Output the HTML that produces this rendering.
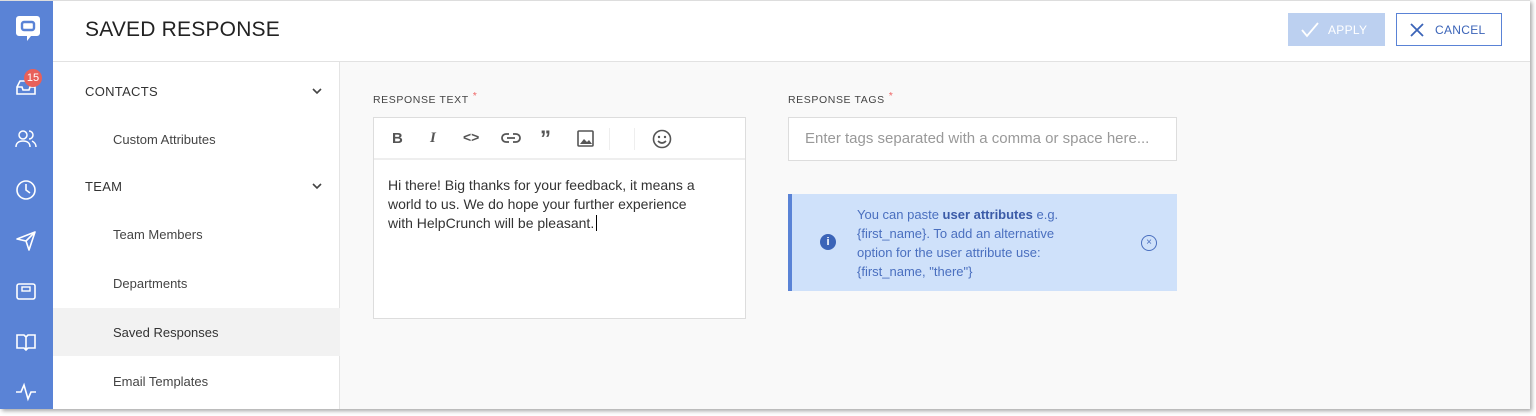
<!DOCTYPE html>
<html><head><style>
*{box-sizing:border-box;margin:0;padding:0}
body{width:1536px;height:416px;background:#fff;font-family:"Liberation Sans",sans-serif;position:relative;overflow:hidden}
.frame{position:absolute;left:0;top:0;width:1530px;height:409px;background:#f9f9f9;box-shadow:2px 2px 4px rgba(0,0,0,.35);border-top:1px solid #ddd;overflow:hidden}
.side{position:absolute;left:0;top:0;width:53px;height:409px;background:#5a83d6}
.side svg{position:absolute;left:15px}
.hdr{position:absolute;left:53px;top:0;right:0;height:61px;background:#fff;border-bottom:1px solid #e2e2e2}
.hdr h1{position:absolute;left:32px;top:17px;font-size:21px;font-weight:normal;color:#222;letter-spacing:.2px}
.btn{position:absolute;top:12px;height:33px;font-size:12px;display:flex;align-items:center;letter-spacing:.3px}
.sub{position:absolute;left:53px;top:61px;width:287px;height:348px;background:#fff;border-right:1px solid #e4e4e4}
.sub div{position:absolute;left:0;width:287px;font-size:13px;color:#444}
.sec{font-size:13px;color:#333!important;padding-left:32px;letter-spacing:.3px}
.sec svg{position:absolute;right:18px;top:4px}
.it{padding-left:60px}
.lbl{position:absolute;font-size:10.5px;color:#444;letter-spacing:.6px}
.lbl b{color:#e66;font-weight:normal;position:relative;top:-4px;margin-left:4px}
</style></head><body>
<div class="frame">
<div class="side">
<svg style="top:14px" width="26" height="32" viewBox="0 0 26 32"><path d="M4 1h18a3 3 0 0 1 3 3v14a3 3 0 0 1-3 3h-6l-4 5v-5H4a3 3 0 0 1-3-3V4a3 3 0 0 1 3-3z" fill="#fff"/><rect x="7" y="7" width="12" height="8" rx="2" fill="none" stroke="#5a83d6" stroke-width="2.4"/></svg>
<svg style="top:76px" width="22" height="20" viewBox="0 0 22 20"><path d="M2 10l3-6h12l3 6v7H2zM2 10h5l1 3h6l1-3h5" fill="none" stroke="#fff" stroke-width="1.6"/></svg>
<div style="position:absolute;left:24px;top:68px;width:18px;height:18px;border-radius:9px;background:#e8605a;color:#fff;font-size:11px;text-align:center;line-height:18px">15</div>
<svg style="top:128px" width="22" height="20" viewBox="0 0 22 20"><circle cx="8" cy="6" r="4" fill="none" stroke="#fff" stroke-width="1.5"/><path d="M1 18c0-4 3-6 7-6s7 2 7 6M14 2a4 4 0 0 1 0 8M17 12c2 1 4 3 4 6" fill="none" stroke="#fff" stroke-width="1.5"/></svg>
<svg style="top:178px" width="22" height="22" viewBox="0 0 22 22"><circle cx="11" cy="11" r="9" fill="none" stroke="#fff" stroke-width="1.6"/><path d="M11 5v6l4 3" fill="none" stroke="#fff" stroke-width="1.6"/></svg>
<svg style="top:229px" width="22" height="22" viewBox="0 0 22 22"><path d="M2 9L20 2 14 20 11 11z M11 11L20 2" fill="none" stroke="#fff" stroke-width="1.6" stroke-linejoin="round"/></svg>
<svg style="top:281px" width="22" height="20" viewBox="0 0 22 20"><rect x="2" y="2" width="18" height="15" rx="2" fill="none" stroke="#fff" stroke-width="1.6"/><rect x="7" y="5" width="8" height="4" fill="none" stroke="#fff" stroke-width="1.4"/></svg>
<svg style="top:331px" width="22" height="20" viewBox="0 0 22 20"><path d="M2 3h7l2 2 2-2h7v13h-7l-2 2-2-2H2zM11 5v13" fill="none" stroke="#fff" stroke-width="1.6"/></svg>
<svg style="top:381px" width="22" height="20" viewBox="0 0 22 20"><path d="M1 10h5l3-7 4 14 3-7h5" fill="none" stroke="#fff" stroke-width="1.6"/></svg>
</div>
<div class="hdr"><h1>SAVED RESPONSE</h1>
<div class="btn" style="left:1235px;width:97px;background:#bcd0f0;color:#fff;padding-left:12px"><svg width="20" height="16" viewBox="0 0 20 16"><path d="M2 8l5 6L18 1" fill="none" stroke="#fff" stroke-width="1.8"/></svg><span style="margin-left:8px">APPLY</span></div>
<div class="btn" style="left:1343px;width:106px;border:1.5px solid #5a83d6;color:#3b64b8;background:#fff;padding-left:12px"><svg width="16" height="16" viewBox="0 0 16 16"><path d="M2 2l12 12M14 2L2 14" stroke="#3b64b8" stroke-width="1.8"/></svg><span style="margin-left:10px">CANCEL</span></div>
</div>
<div class="sub">
<div class="sec" style="top:22px">CONTACTS<svg width="10" height="7" viewBox="0 0 10 7"><path d="M1 1l4 4 4-4" fill="none" stroke="#444" stroke-width="1.6"/></svg></div>
<div class="it" style="top:70px">Custom Attributes</div>
<div class="sec" style="top:117px">TEAM<svg width="10" height="7" viewBox="0 0 10 7"><path d="M1 1l4 4 4-4" fill="none" stroke="#444" stroke-width="1.6"/></svg></div>
<div class="it" style="top:165px">Team Members</div>
<div class="it" style="top:214px">Departments</div>
<div style="top:246px;height:48px;background:#f2f2f2"></div>
<div class="it" style="top:263px;color:#333">Saved Responses</div>
<div class="it" style="top:312px">Email Templates</div>
</div>
<div class="lbl" style="left:373px;top:93px">RESPONSE TEXT<b>*</b></div>
<div style="position:absolute;left:373px;top:116px;width:373px;height:202px;background:#fff;border:1px solid #ddd">
<div style="height:42px;border-bottom:2px solid #eee;position:relative;font-size:15px;color:#555">
<span style="position:absolute;left:18px;top:12px;font-weight:bold">B</span>
<span style="position:absolute;left:56px;top:12px;font-weight:bold;font-style:italic;font-family:'Liberation Serif',serif">I</span>
<span style="position:absolute;left:89px;top:11px;font-size:14px;font-weight:bold">&lt;&gt;</span>
<svg style="position:absolute;left:127px;top:14px" width="20" height="12" viewBox="0 0 20 12"><path d="M8 2H5a4 4 0 0 0 0 8h3M12 2h3a4 4 0 0 1 0 8h-3M6 6h8" fill="none" stroke="#555" stroke-width="1.8"/></svg>
<span style="position:absolute;left:166px;top:8px;font-size:22px;font-weight:bold;letter-spacing:-2px">&#8221;</span>
<svg style="position:absolute;left:203px;top:12px" width="17" height="17" viewBox="0 0 17 17"><rect x="1" y="1" width="15" height="15" rx="1" fill="none" stroke="#555" stroke-width="1.6"/><path d="M3 14l4-5 3 3 2-2 3 4z" fill="#555"/></svg>
<div style="position:absolute;left:235px;top:10px;width:1px;height:22px;background:#eee"></div>
<div style="position:absolute;left:260px;top:10px;width:1px;height:22px;background:#eee"></div>
<svg style="position:absolute;left:278px;top:11px" width="20" height="20" viewBox="0 0 20 20"><circle cx="10" cy="10" r="8.5" fill="none" stroke="#555" stroke-width="1.6"/><circle cx="7" cy="8" r="1.2" fill="#555"/><circle cx="13" cy="8" r="1.2" fill="#555"/><path d="M6 12q4 4 8 0" fill="none" stroke="#555" stroke-width="1.6"/></svg>
</div>
<div style="padding:16px 14px;font-size:14px;line-height:19px;color:#333;width:340px">Hi there! Big thanks for your feedback, it means a world to us. We do hope your further experience with HelpCrunch will be pleasant.<span style="border-left:1px solid #000;margin-left:2px"></span></div>
</div>
<div class="lbl" style="left:788px;top:93px">RESPONSE TAGS<b>*</b></div>
<div style="position:absolute;left:788px;top:116px;width:389px;height:44px;background:#fff;border:1px solid #ddd;font-size:15px;color:#999;padding:12px 16px">Enter tags separated with a comma or space here...</div>
<div style="position:absolute;left:788px;top:193px;width:389px;height:97px;background:#cfe1fa;border-left:4px solid #5a83d6">
<div style="position:absolute;left:28px;top:40px;width:16px;height:16px;border-radius:8px;background:#3b64b8;color:#fff;font-size:11px;font-weight:bold;text-align:center;line-height:16px">i</div>
<div style="position:absolute;left:65px;top:11px;width:222px;font-size:13px;line-height:19px;color:#4a6fbf">You can paste <b style="color:#3b5ba8">user attributes</b> e.g. {first_name}. To add an alternative option for the user attribute use: {first_name, "there"}</div>
<div style="position:absolute;left:349px;top:41px;width:16px;height:16px;border:1.5px solid #4a6fbf;border-radius:8px;color:#4a6fbf;font-size:10px;text-align:center;line-height:13px">×</div>
</div>
</div>
</body></html>
